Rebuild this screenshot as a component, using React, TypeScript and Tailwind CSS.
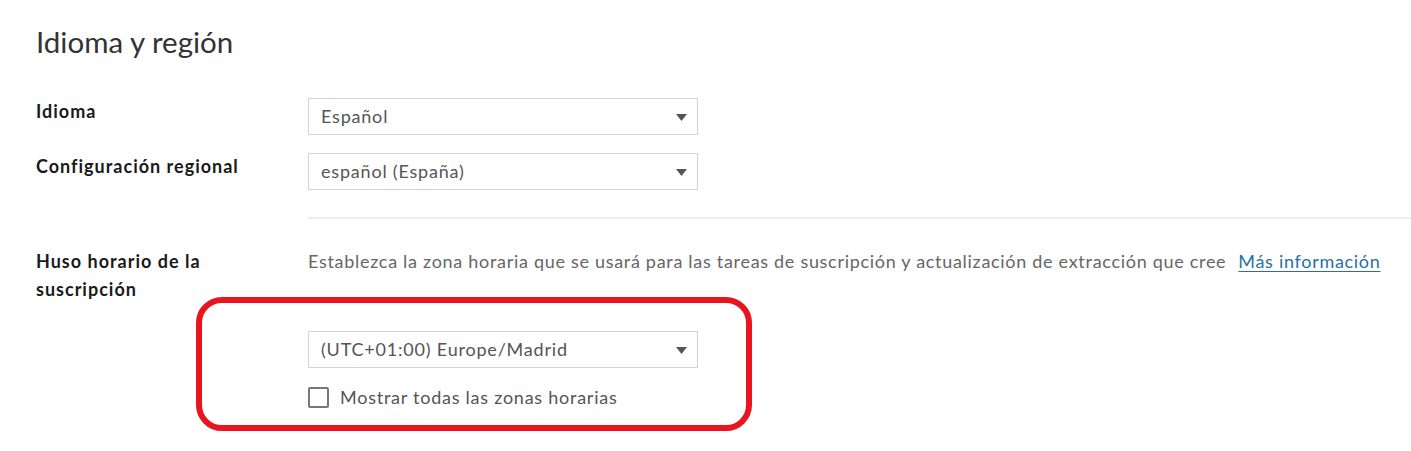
function Select({ value }: { value: string }) {
  return (
    <div className="flex h-[37px] w-[390px] items-center justify-between border border-[#d4d4d4] bg-white pl-[12px] pr-[10px] text-[18px] tracking-[0.8px] text-[#555]">
      <span>{value}</span>
      <svg width="11" height="7" viewBox="0 0 11 7" className="mt-[1px]">
        <path d="M0 0h11L5.5 7z" fill="#555" />
      </svg>
    </div>
  );
}

export default function App() {
  return (
    <div
      className="min-h-[451px] bg-white pl-[36px] pt-[24px] text-[#333]"
      style={{ fontFamily: "Lato, 'Open Sans', sans-serif" }}
    >
      <h1 className="text-[29.5px] leading-[36px] text-[#333]">Idioma y región</h1>

      <div className="mt-[38px] flex flex-col gap-[18px]">
        <div className="flex items-start">
          <div className="w-[272px] pt-[1px] text-[18px] font-bold leading-[24px] tracking-[1px] text-[#1a1a1a]">
            Idioma
          </div>
          <Select value="Español" />
        </div>
        <div className="flex items-start">
          <div className="w-[272px] pt-[1px] text-[18px] font-bold leading-[24px] tracking-[1px] text-[#1a1a1a]">
            Configuración regional
          </div>
          <Select value="español (España)" />
        </div>
      </div>

      <div className="ml-[272px] mt-[27px] h-[2px] bg-[#ececec]" />

      <div className="mt-[28px] flex items-start">
        <div className="w-[272px] text-[18px] font-bold leading-[28px] tracking-[1px] text-[#1a1a1a]">
          Huso horario de la
          <br />
          suscripción
        </div>
        <div className="flex flex-col">
          <p className="whitespace-nowrap text-[18px] leading-[28px] tracking-[0.7px] text-[#666]">
            Establezca la zona horaria que se usará para las tareas de suscripción y actualización de extracción que cree
            <a href="#" className="ml-[12px] text-[#2b6ea6] underline underline-offset-[3px]">
              Más información
            </a>
          </p>
          <div className="relative mt-[56px] w-[390px]">
            <div className="pointer-events-none absolute -left-[112px] -top-[34px] h-[134px] w-[556px] rounded-[26px] border-[6px] border-[#e8141e]" />
            <Select value="(UTC+01:00) Europe/Madrid" />
            <label className="mt-[16px] flex items-center gap-[11px] text-[18px] tracking-[0.75px] text-[#555]">
              <span className="h-[21px] w-[21px] shrink-0 rounded-[2px] border-[2px] border-[#777] bg-white" />
              Mostrar todas las zonas horarias
            </label>
          </div>
        </div>
      </div>
    </div>
  );
}
